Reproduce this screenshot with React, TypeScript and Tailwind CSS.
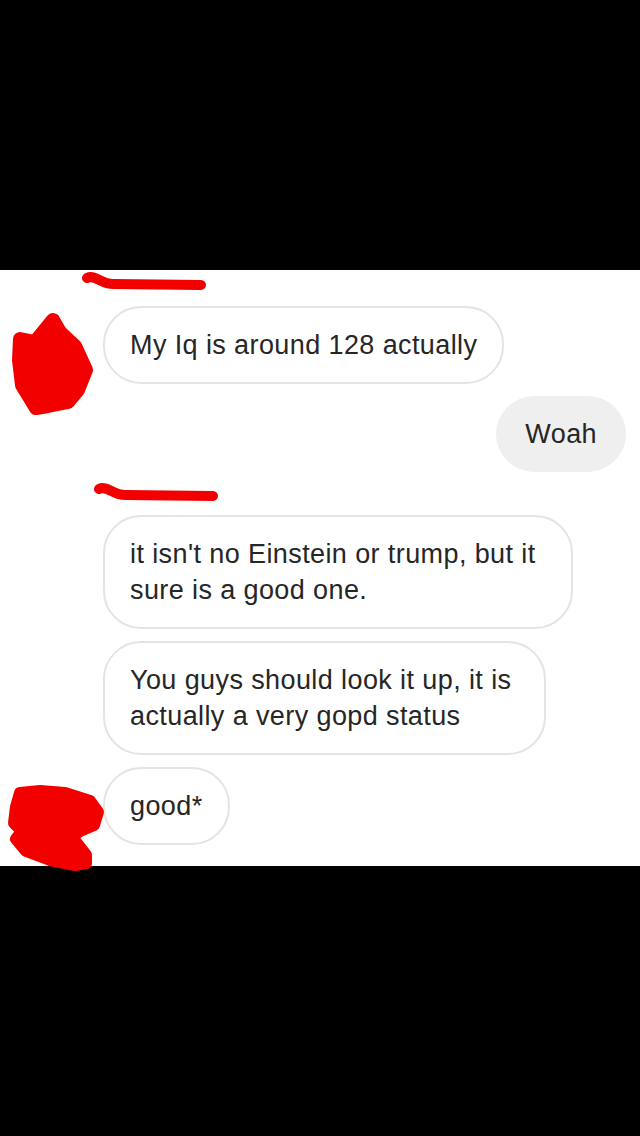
import type { ReactNode } from 'react'

const font = { fontFamily: '"Liberation Sans", Arial, sans-serif' }

function NameScribble({ offset }: { offset: number }) {
    return (
        <div className="h-full flex items-start" style={{ paddingLeft: offset }}>
            <svg width="130" height="30" viewBox="0 0 130 30">
                <path d="M6 8 C 14 4, 20 14, 32 14 L 120 15" stroke="#f20000" strokeWidth="10" strokeLinecap="round" fill="none" />
            </svg>
        </div>
    )
}

// red blobs scribbled over the avatars
function AvatarScribble({ variant }: { variant: 1 | 2 }) {
    if (variant === 1) {
        return (
            <svg className="absolute left-0 top-0 overflow-visible" width="110" height="120" viewBox="0 0 110 120">
                <circle cx="62" cy="40" r="14" fill="#222" />
                <polygon
                    points="53,14 60,26 75,40 86,64 78,84 68,96 48,100 36,102 22,79 19,54 20,33 35,36"
                    fill="#f20000"
                    stroke="#f20000"
                    strokeWidth="14"
                    strokeLinejoin="round"
                />
            </svg>
        )
    }
    return (
        <svg className="absolute left-0 top-0 overflow-visible" width="110" height="110" viewBox="0 0 110 110">
            <circle cx="55" cy="38" r="18" fill="#222" />
            <polygon
                points="20,26 40,24 65,26 90,34 98,45 94,58 80,64 72,70 86,88 86,96 75,98 50,93 26,84 16,72 22,64 14,56 16,40"
                fill="#f20000"
                stroke="#f20000"
                strokeWidth="12"
                strokeLinejoin="round"
            />
        </svg>
    )
}

function Bubble({ children }: { children: ReactNode }) {
    return (
        <div className="border-2 border-[#e4e4e4] bg-white rounded-[38px] px-[25px] py-[19px] text-[27px] leading-[36px] tracking-[0.4px] text-[#262626] whitespace-nowrap">
            {children}
        </div>
    )
}

function Row({ children, avatar }: { children: ReactNode; avatar?: 1 | 2 }) {
    return (
        <div className="flex items-start">
            <div className="w-[103px] shrink-0 self-stretch relative z-10">{avatar ? <AvatarScribble variant={avatar} /> : null}</div>
            {children}
        </div>
    )
}

export default function App() {
    return (
        <div className="w-[640px] h-[1136px] bg-black flex flex-col overflow-hidden" style={font}>
            <div className="h-[270px] shrink-0" />
            <div className="h-[596px] shrink-0 bg-white flex flex-col">
                <div className="h-[36px]">
                    <NameScribble offset={81} />
                </div>
                <Row avatar={1}>
                    <Bubble>My Iq is around 128 actually</Bubble>
                </Row>
                <div className="flex justify-end pr-[14px] mt-[12px]">
                    <div className="bg-[#efefef] rounded-[38px] px-[29px] py-[20px] text-[27px] leading-[36px] tracking-[0.4px] text-[#262626]">Woah</div>
                </div>
                <div className="h-[43px] pt-[9px]">
                    <NameScribble offset={93} />
                </div>
                <div className="flex flex-col gap-[12px]">
                    <Row>
                        <div className="w-[470px]">
                            <Bubble>
                                it isn't no Einstein or trump, but it
                                <br />
                                sure is a good one.
                            </Bubble>
                        </div>
                    </Row>
                    <Row>
                        <div className="w-[443px]">
                            <Bubble>
                                You guys should look it up, it is
                                <br />
                                actually a very gopd status
                            </Bubble>
                        </div>
                    </Row>
                    <Row avatar={2}>
                        <Bubble>good*</Bubble>
                    </Row>
                </div>
            </div>
            <div className="flex-1 bg-black" />
        </div>
    )
}
